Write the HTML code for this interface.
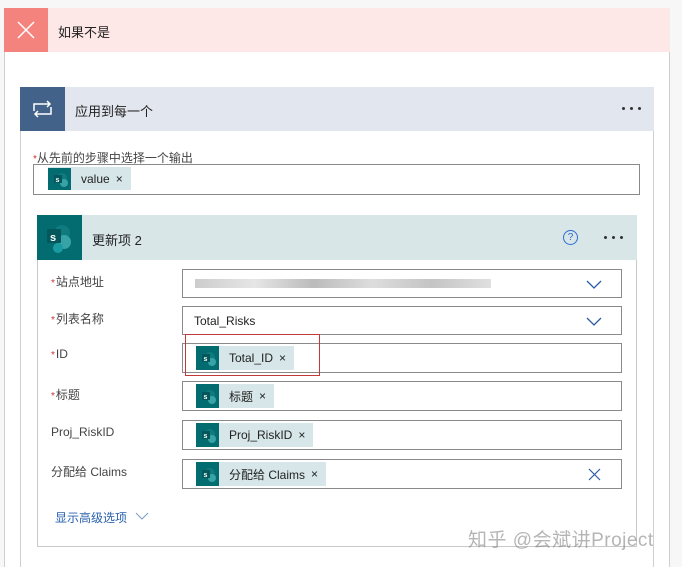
<!DOCTYPE html>
<html style="overflow:hidden;height:567px"><head><meta charset="utf-8"><style>
*{box-sizing:border-box;margin:0;padding:0}
body{width:682px;height:567px;background:#f7f7f7;font-family:"Liberation Sans","Noto Sans CJK SC",sans-serif;font-size:13px;color:#333;position:relative;overflow:hidden}
.a{position:absolute}
.chip{position:absolute;height:22px;background:#d7e6e8;display:flex;align-items:center;font-size:12px;color:#222;padding-right:8px}
.chip .ic{width:23px;height:22px;background:#036c70;margin-right:10px;display:flex;align-items:center;justify-content:center}
.chip .x{margin-left:6px;font-size:12px}
.inp{position:absolute;left:182px;width:440px;height:30px;border:1px solid #8a8a8a;background:#fff}
.lbl{position:absolute;left:51px;font-size:12px;color:#444}
.lbl b{color:#c33;font-weight:normal;font-size:10px;margin-right:1px}
.dots{position:absolute;display:flex;gap:5px}
.dots i{width:3px;height:3px;background:#333;border-radius:50%;display:block}
</style></head><body>
<svg width="0" height="0" style="position:absolute"><defs><g id="sp"><circle cx="11" cy="8" r="5" fill="#0f7b7f"/><circle cx="13" cy="13" r="4" fill="#37a3a6"/><rect x="3" y="5" width="8" height="8" fill="#04585b"/><text x="4.5" y="12" font-size="7" fill="#fff" font-family="Liberation Sans" font-weight="bold">s</text></g></defs></svg>
<div class="a" style="left:4px;top:8px;width:666px;height:560px;background:#fff;border:1px solid #cfcfcf;border-bottom:none"></div>
<div class="a" style="left:4px;top:8px;width:666px;height:44px;background:#fde7e7"></div>
<div class="a" style="left:4px;top:8px;width:44px;height:44px;background:#f4837d"><svg width="44" height="44"><path d="M14 14L30 30M30 14L14 30" stroke="#fff" stroke-width="1.5"/></svg></div>
<div class="a" style="left:58px;top:22px;font-size:13px;color:#222">如果不是</div>
<div class="a" style="left:20px;top:87px;width:634px;height:480px;background:#fff;border:1px solid #cfcfcf;border-bottom:none"></div>
<div class="a" style="left:20px;top:87px;width:634px;height:44px;background:#e2e7ef"></div>
<div class="a" style="left:20px;top:87px;width:45px;height:44px;background:#426289"><svg width="45" height="44"><path d="M14 24V17H30M27 14L30 17L27 20M31 20V27H15M18 30L15 27L18 24" stroke="#fff" stroke-width="1.5" fill="none"/></svg></div>
<div class="a" style="left:75px;top:101px;font-size:13px;color:#222">应用到每一个</div>
<div class="dots" style="left:622px;top:107px"><i></i><i></i><i></i></div>
<div class="a" style="left:33px;top:149px;font-size:12px;color:#444"><span style="color:#c33;font-size:10px">*</span>从先前的步骤中选择一个输出</div>
<div class="a" style="left:33px;top:164px;width:607px;height:31px;border:1px solid #8a8a8a"></div>
<div class="chip" style="left:48px;top:167px;height:23px"><div class="ic"><svg width="18" height="18"><use href="#sp"/></svg></div>value<span class="x">×</span></div>
<div class="a" style="left:37px;top:215px;width:600px;height:332px;background:#fff;border:1px solid #c8c8c8"></div>
<div class="a" style="left:37px;top:215px;width:600px;height:45px;background:#d8e6e8"></div>
<div class="a" style="left:37px;top:215px;width:45px;height:45px;background:#036c70"><svg width="45" height="45"><circle cx="25" cy="18" r="8" fill="#0f7b7f"/><circle cx="27" cy="27" r="7" fill="#37a3a6"/><circle cx="21" cy="33" r="5" fill="#1a9ba1"/><rect x="10" y="14" width="14" height="14" rx="1" fill="#04585b"/><text x="13" y="26" font-size="11" fill="#fff" font-family="Liberation Sans" font-weight="bold">s</text></svg></div>
<div class="a" style="left:92px;top:230px;font-size:13px;color:#222">更新项 2</div>
<div class="a" style="left:563px;top:230px;width:15px;height:15px;border:1.3px solid #2b6cd0;border-radius:50%;font-size:10px;color:#2b6cd0;text-align:center;line-height:13px">?</div>
<div class="dots" style="left:604px;top:236px"><i></i><i></i><i></i></div>

<div class="lbl" style="top:273px"><b>*</b>站点地址</div>
<div class="inp" style="top:269px;height:29px"><div class="a" style="left:12px;top:9px;width:296px;height:9px;background:linear-gradient(90deg,#ccc,#e6e6e6 20%,#bbb 40%,#ddd 60%,#c4c4c4 80%,#e0e0e0)"></div><svg class="a" style="left:402px;top:8px" width="18" height="12"><path d="M2 3L9 10L16 3" stroke="#2a5ba8" stroke-width="1.3" fill="none"/></svg></div>
<div class="lbl" style="top:310px"><b>*</b>列表名称</div>
<div class="inp" style="top:306px;height:29px"><div class="a" style="left:11px;top:7px;font-size:12px;color:#222">Total_Risks</div><svg class="a" style="left:402px;top:8px" width="18" height="12"><path d="M2 3L9 10L16 3" stroke="#2a5ba8" stroke-width="1.3" fill="none"/></svg></div>
<div class="lbl" style="top:347px"><b>*</b>ID</div>
<div class="inp" style="top:343px"></div>
<div class="chip" style="left:196px;top:346px;height:24px"><div class="ic" style="height:24px"><svg width="18" height="18"><use href="#sp"/></svg></div>Total_ID<span class="x">×</span></div>
<div class="a" style="left:185px;top:334px;width:135px;height:42px;border:1.3px solid #c0393b"></div>
<div class="lbl" style="top:386px"><b>*</b>标题</div>
<div class="inp" style="top:381px"></div>
<div class="chip" style="left:196px;top:384px;height:24px"><div class="ic" style="height:24px"><svg width="18" height="18"><use href="#sp"/></svg></div>标题<span class="x">×</span></div>
<div class="lbl" style="top:425px">Proj_RiskID</div>
<div class="inp" style="top:420px"></div>
<div class="chip" style="left:196px;top:423px;height:24px"><div class="ic" style="height:24px"><svg width="18" height="18"><use href="#sp"/></svg></div>Proj_RiskID<span class="x">×</span></div>
<div class="lbl" style="top:463px">分配给 Claims</div>
<div class="inp" style="top:459px"><svg class="a" style="left:404px;top:7px" width="15" height="15"><path d="M2 2L13 13M13 2L2 13" stroke="#2a5ba8" stroke-width="1.2"/></svg></div>
<div class="chip" style="left:196px;top:462px;height:24px"><div class="ic" style="height:24px"><svg width="18" height="18"><use href="#sp"/></svg></div>分配给 Claims<span class="x">×</span></div>
<div class="a" style="left:55px;top:509px;font-size:12px;color:#2a62b0">显示高级选项</div>
<svg class="a" style="left:135px;top:512px" width="14" height="9"><path d="M1 1L7 7L13 1" stroke="#7a9ccc" stroke-width="1" fill="none"/></svg>
<div class="a" style="left:468px;top:525px;font-size:19px;color:rgba(120,120,120,0.55);white-space:nowrap;letter-spacing:0.5px">知乎 @会斌讲Project</div>
</body></html>
